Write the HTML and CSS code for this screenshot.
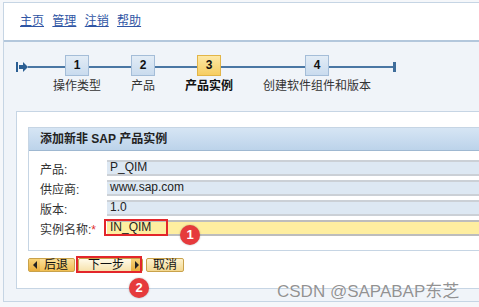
FILE: index.html
```html
<!DOCTYPE html>
<html lang="zh">

<head>
    <meta charset="UTF-8">
    <title>添加新非 SAP 产品实例</title>
    <link rel="stylesheet" href="styles.css">
</head>

<body>

    <div class="frame">
        <div class="nav">
            <a href="#">主页</a>
            <a href="#">管理</a>
            <a href="#">注销</a>
            <a href="#">帮助</a>
        </div>

        <div class="content">
            <div class="wizard">
                <svg class="start-icon" width="12" height="10" viewBox="0 0 12 10">
                    <rect x="0" y="0" width="2" height="10" fill="#2b5f93"/>
                    <rect x="3" y="3" width="4" height="4" fill="#2b5f93"/>
                    <polygon points="7,0 12,5 7,10" fill="#2b5f93"/>
                </svg>
                <div class="track">
                    <div class="step">
                        <div class="step-box">1</div>
                        <div class="step-label">操作类型</div>
                    </div>
                    <div class="step">
                        <div class="step-box">2</div>
                        <div class="step-label">产品</div>
                    </div>
                    <div class="step current">
                        <div class="step-box">3</div>
                        <div class="step-label">产品实例</div>
                    </div>
                    <div class="step">
                        <div class="step-box">4</div>
                        <div class="step-label">创建软件组件和版本</div>
                    </div>
                </div>
            </div>

            <div class="panel">
                <div class="form-box">
                    <div class="form-head">添加新非 SAP 产品实例</div>
                    <div class="form-rows">
                        <div class="row">
                            <label>产品:</label>
                            <div class="field">P_QIM</div>
                        </div>
                        <div class="row">
                            <label>供应商:</label>
                            <div class="field">www.sap.com</div>
                        </div>
                        <div class="row">
                            <label>版本:</label>
                            <div class="field">1.0</div>
                        </div>
                        <div class="row">
                            <label>实例名称:<span class="req">*</span></label>
                            <div class="field required">IN_QIM</div>
                            <span class="mark mark-field"></span>
                            <span class="badge badge-1">1</span>
                        </div>
                    </div>
                </div>

                <div class="buttons">
                    <button class="btn btn-back"><span class="arrow-l"></span>后退</button>
                    <button class="btn btn-next">下一步<span class="arrow-r"></span></button>
                    <button class="btn">取消</button>
                    <span class="mark mark-btn"></span>
                    <span class="badge badge-2">2</span>
                </div>
            </div>
        </div>
    </div>

    <div class="watermark">CSDN @SAPABAP东芝</div>

</body>
</html>
```

FILE: styles.css
```css
body {
    font-family: "Liberation Sans", "Noto Sans CJK SC", sans-serif;
    font-size: 12px;
    color: #333;
    background-color: #f5f7fa;
    margin: 0;
    padding-top: 2px;
    overflow: hidden;
}

.frame {
    margin-left: 3px;
    width: 620px;
    border: 1px solid #c6d5e4;
    border-right: none;
    background-color: #fff;
}

.nav {
    height: 39px;
    padding: 10px 0 0 16px;
    box-sizing: border-box;
    line-height: 16px;
    border-bottom: 2px solid #b3c7dc;
}

.nav a {
    color: #2f55a4;
    text-decoration: underline;
    margin-right: 5px;
}

.content {
    background-color: #f0f4f9;
    padding: 13px 0 12px 12px;
}

/* wizard */
.wizard {
    display: flex;
    align-items: flex-start;
    margin-bottom: 18px;
}

.start-icon {
    margin-top: 7px;
    flex: none;
}

.track {
    position: relative;
    display: flex;
    gap: 30px;
    padding: 0 25px;
}

.track::before {
    content: "";
    position: absolute;
    left: 0;
    right: 0;
    top: 11px;
    height: 2px;
    background-color: #4a77a4;
}

.track::after {
    content: "";
    position: absolute;
    right: 0;
    top: 7px;
    width: 3px;
    height: 10px;
    background-color: #3f6d9b;
}

.step {
    position: relative;
    display: flex;
    flex-direction: column;
    align-items: center;
}

.step-box {
    width: 24px;
    height: 21px;
    box-sizing: border-box;
    border: 1px solid #a4bdd8;
    background: linear-gradient(#e2ecf6, #c9dbee);
    font-weight: bold;
    color: #111;
    text-align: center;
    line-height: 19px;
}

.step-label {
    margin-top: 3px;
    line-height: 14px;
    white-space: nowrap;
}

.current .step-box {
    border-color: #e2b548;
    background: linear-gradient(#fde8a6, #f6cd62);
}

.current .step-label {
    font-weight: bold;
    color: #111;
}

/* panel */
.panel {
    position: relative;
    background-color: #fff;
    border: 1px solid #c6d5e4;
    border-right: none;
    padding: 15px 0 16px 11px;
}

.form-box {
    border: 1px solid #c6d5e4;
    border-right: none;
}

.form-head {
    height: 22px;
    line-height: 22px;
    padding-left: 11px;
    font-weight: bold;
    color: #222;
    background: linear-gradient(#d6e5f4, #bcd3ea);
    border-bottom: 1px solid #9fb8d1;
}

.form-rows {
    display: flex;
    flex-direction: column;
    gap: 4px;
    padding: 9px 0 14px 11px;
}

.row {
    position: relative;
    display: flex;
    align-items: center;
    height: 16px;
}

.row label {
    width: 67px;
    flex: none;
}

.req {
    color: #e03030;
}

.field {
    flex: 1;
    height: 16px;
    box-sizing: border-box;
    border-top: 2px solid #cbd0d6;
    border-bottom: 2px solid #cbd0d6;
    background-color: #dde8f3;
    padding-left: 3px;
    line-height: 11px;
    color: #222;
}

.field.required {
    background-color: #feeea0;
    border-color: #bdbdbd;
}

/* buttons */
.buttons {
    position: relative;
    display: flex;
    gap: 3px;
    margin-top: 7px;
}

.btn {
    font-family: inherit;
    font-size: 12px;
    height: 14px;
    padding: 0 6px;
    line-height: 12px;
    border: 1px solid #c9a24b;
    border-radius: 2px;
    background: linear-gradient(#fdf2cf, #f3d891);
    color: #111;
    display: flex;
    align-items: center;
    gap: 4px;
}

.btn-back {
    padding-left: 0;
    background: linear-gradient(#fbe09a, #f1bf52);
}

.btn-next {
    padding-right: 0;
    padding-left: 9px;
    gap: 7px;
    background: linear-gradient(#fffaea, #f6e2ac);
}

.arrow-l,
.arrow-r {
    width: 11px;
    height: 12px;
    display: flex;
    align-items: center;
    justify-content: center;
    background: linear-gradient(#f8d47a, #e8ad3c);
}

.arrow-l::before {
    content: "";
    border-right: 4px solid #222;
    border-top: 4px solid transparent;
    border-bottom: 4px solid transparent;
}

.arrow-r::before {
    content: "";
    border-left: 4px solid #222;
    border-top: 4px solid transparent;
    border-bottom: 4px solid transparent;
}

/* annotations */
.mark {
    position: absolute;
    border: 2px solid #e3262b;
}

.mark-field {
    left: 64px;
    top: -1px;
    width: 60px;
    height: 13px;
}

.mark-btn {
    left: 48px;
    top: -2px;
    width: 62px;
    height: 13px;
}

.badge {
    position: absolute;
    width: 20px;
    height: 20px;
    border-radius: 50%;
    background-color: #e63a3c;
    color: #fff;
    font-weight: bold;
    font-size: 13px;
    line-height: 20px;
    text-align: center;
    box-shadow: 0 0 2px rgba(0, 0, 0, 0.3);
}

.badge-1 {
    left: 140px;
    top: 5px;
}

.badge-2 {
    left: 101px;
    top: 20px;
}

.watermark {
    position: absolute;
    left: 277px;
    top: 277px;
    font-size: 17px;
    color: rgba(110, 110, 110, 0.75);
    text-shadow: 0 0 1px #fff;
}
```
